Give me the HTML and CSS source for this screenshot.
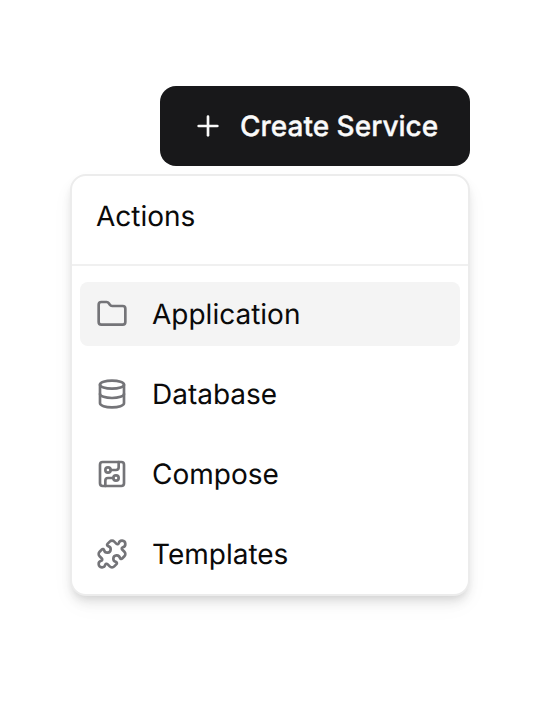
FILE: index.html
```html
<!DOCTYPE html>
<html lang="en">
<head>
<meta charset="utf-8">
<title>Create Service</title>
<link rel="stylesheet" href="styles.css">
</head>
<body>
<main class="stage">
  <button class="trigger" type="button">
    <svg class="icon plus" viewBox="0 0 24 24"><path d="M5 12h14"/><path d="M12 5v14"/></svg>
    <span>Create Service</span>
  </button>
  <section class="menu">
    <div class="menu-label">Actions</div>
    <div class="separator"></div>
    <ul class="items">
      <li class="item active">
        <svg class="icon" viewBox="0 0 24 24"><path d="M20 20a2 2 0 0 0 2-2V8a2 2 0 0 0-2-2h-7.9a2 2 0 0 1-1.69-.9L9.6 3.9A2 2 0 0 0 7.93 3H4a2 2 0 0 0-2 2v13a2 2 0 0 0 2 2Z"/></svg>
        <span>Application</span>
      </li>
      <li class="item">
        <svg class="icon" viewBox="0 0 24 24"><ellipse cx="12" cy="5" rx="9" ry="3"/><path d="M3 5V19A9 3 0 0 0 21 19V5"/><path d="M3 12A9 3 0 0 0 21 12"/></svg>
        <span>Database</span>
      </li>
      <li class="item">
        <svg class="icon" viewBox="0 0 24 24"><rect width="18" height="18" x="3" y="3" rx="2"/><path d="M11 9h4a2 2 0 0 0 2-2V3"/><circle cx="9" cy="9" r="2"/><path d="M7 21v-4a2 2 0 0 1 2-2h4"/><circle cx="15" cy="15" r="2"/></svg>
        <span>Compose</span>
      </li>
      <li class="item">
        <svg class="icon" viewBox="0 0 24 24"><path d="M15.39 4.39a1 1 0 0 0 1.68-.474 2.5 2.5 0 1 1 3.014 3.015 1 1 0 0 0-.474 1.68l1.683 1.682a2.414 2.414 0 0 1 0 3.414L19.61 15.39a1 1 0 0 1-1.68-.474 2.5 2.5 0 1 0-3.014 3.015 1 1 0 0 1 .474 1.68l-1.683 1.682a2.414 2.414 0 0 1-3.414 0L8.61 19.61a1 1 0 0 0-1.68.474 2.5 2.5 0 1 1-3.014-3.015 1 1 0 0 0 .474-1.68l-1.683-1.682a2.414 2.414 0 0 1 0-3.414L4.39 8.61a1 1 0 0 1 1.68.474 2.5 2.5 0 1 0 3.014-3.015 1 1 0 0 1-.474-1.68l1.683-1.682a2.414 2.414 0 0 1 3.414 0z"/></svg>
        <span>Templates</span>
      </li>
    </ul>
  </section>
</main>
</body>
</html>
```
FILE: styles.css
```css
* { box-sizing: border-box; }
html, body { margin: 0; height: 100%; background: #fff; }
body {
  font-family: Inter, "Liberation Sans", sans-serif;
  color: #0a0a0a;
  overflow: hidden;
  text-rendering: geometricPrecision;
}
.stage {
  display: flex;
  flex-direction: column;
  align-items: flex-end;
  gap: 8px;
  padding: 86px 68px 0 0;
}
.trigger {
  display: flex;
  align-items: center;
  gap: 16px;
  width: 310px;
  height: 80px;
  padding: 0 0 0 32px;
  border: 0;
  border-radius: 16px;
  background: #18181a;
  color: #fafafa;
  font: 500 28px/40px Inter, sans-serif;
  text-rendering: geometricPrecision;
  white-space: nowrap;
  -webkit-text-stroke: 0.35px #fafafa;
}
.icon {
  flex: none;
  width: 32px;
  height: 32px;
  fill: none;
  stroke: #747478;
  stroke-width: 2;
  stroke-linecap: round;
  stroke-linejoin: round;
}
.plus { stroke: #fafafa; }
.menu {
  width: 400px;
  height: 422px;
  border: 2px solid #ececec;
  border-radius: 16px;
  background: #fff;
  box-shadow: 0 8px 12px -2px rgba(0,0,0,.1), 0 4px 8px -4px rgba(0,0,0,.1), 0 10px 24px rgba(0,0,0,.03);
}
.menu-label {
  height: 80px;
  padding: 0 24px;
  font-size: 28px;
  line-height: 80px;
}
.separator { height: 2px; margin-top: 8px; background: #f0f0f0; }
.items {
  display: flex;
  flex-direction: column;
  gap: 16px;
  margin: 0;
  padding: 16px 8px 0;
  list-style: none;
}
.item {
  display: flex;
  align-items: center;
  gap: 24px;
  height: 64px;
  padding: 0 16px;
  border-radius: 8px;
  font-size: 28px;
}
.active { background: #f4f4f4; }
```
